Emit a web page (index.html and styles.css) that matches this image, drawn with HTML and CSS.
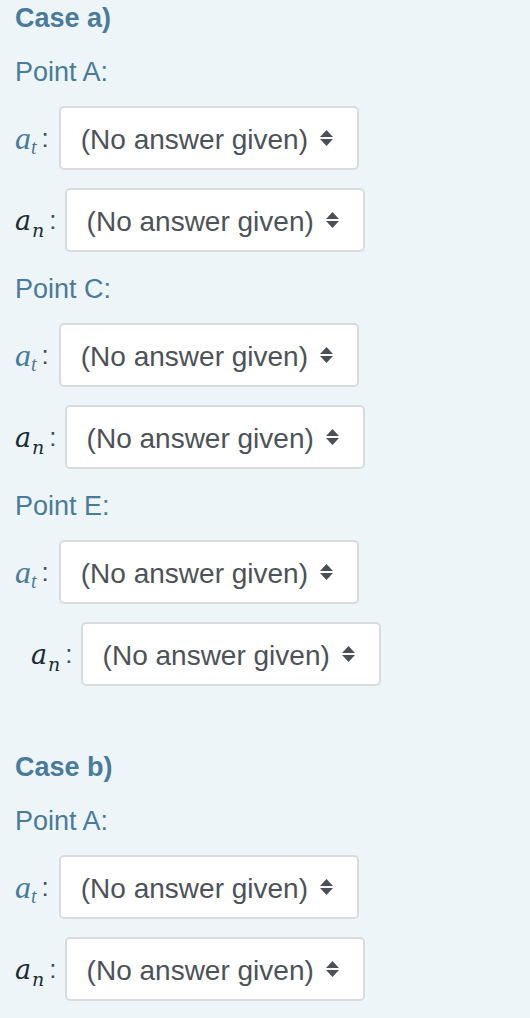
FILE: index.html
```html
<!DOCTYPE html>
<html lang="en">
<head>
<meta charset="utf-8">
<title>Cases</title>
<link rel="stylesheet" href="styles.css">
</head>
<body>
<div class="page">
  <section class="case">
    <h2 class="case-title">Case a)</h2>
    <div class="point">
      <p class="point-title">Point A:</p>
      <div class="field">
        <span class="var var-t"><i class="sym">a</i><sub class="idx">t</sub></span><span class="colon">:</span>
        <div class="select"><span class="select-text">(No answer given)</span><svg class="arrows" width="13" height="16" viewBox="0 0 13 16"><polygon points="0,7 6.5,0 13,7"/><polygon points="0,9 13,9 6.5,16"/></svg></div>
      </div>
      <div class="field">
        <span class="var var-n"><i class="sym">a</i><sub class="idx">n</sub></span><span class="colon">:</span>
        <div class="select"><span class="select-text">(No answer given)</span><svg class="arrows" width="13" height="16" viewBox="0 0 13 16"><polygon points="0,7 6.5,0 13,7"/><polygon points="0,9 13,9 6.5,16"/></svg></div>
      </div>
    </div>
    <div class="point">
      <p class="point-title">Point C:</p>
      <div class="field">
        <span class="var var-t"><i class="sym">a</i><sub class="idx">t</sub></span><span class="colon">:</span>
        <div class="select"><span class="select-text">(No answer given)</span><svg class="arrows" width="13" height="16" viewBox="0 0 13 16"><polygon points="0,7 6.5,0 13,7"/><polygon points="0,9 13,9 6.5,16"/></svg></div>
      </div>
      <div class="field">
        <span class="var var-n"><i class="sym">a</i><sub class="idx">n</sub></span><span class="colon">:</span>
        <div class="select"><span class="select-text">(No answer given)</span><svg class="arrows" width="13" height="16" viewBox="0 0 13 16"><polygon points="0,7 6.5,0 13,7"/><polygon points="0,9 13,9 6.5,16"/></svg></div>
      </div>
    </div>
    <div class="point">
      <p class="point-title">Point E:</p>
      <div class="field">
        <span class="var var-t"><i class="sym">a</i><sub class="idx">t</sub></span><span class="colon">:</span>
        <div class="select"><span class="select-text">(No answer given)</span><svg class="arrows" width="13" height="16" viewBox="0 0 13 16"><polygon points="0,7 6.5,0 13,7"/><polygon points="0,9 13,9 6.5,16"/></svg></div>
      </div>
      <div class="field field-indent">
        <span class="var var-n"><i class="sym">a</i><sub class="idx">n</sub></span><span class="colon">:</span>
        <div class="select"><span class="select-text">(No answer given)</span><svg class="arrows" width="13" height="16" viewBox="0 0 13 16"><polygon points="0,7 6.5,0 13,7"/><polygon points="0,9 13,9 6.5,16"/></svg></div>
      </div>
    </div>
  </section>
  <section class="case">
    <h2 class="case-title">Case b)</h2>
    <div class="point">
      <p class="point-title">Point A:</p>
      <div class="field">
        <span class="var var-t"><i class="sym">a</i><sub class="idx">t</sub></span><span class="colon">:</span>
        <div class="select"><span class="select-text">(No answer given)</span><svg class="arrows" width="13" height="16" viewBox="0 0 13 16"><polygon points="0,7 6.5,0 13,7"/><polygon points="0,9 13,9 6.5,16"/></svg></div>
      </div>
      <div class="field">
        <span class="var var-n"><i class="sym">a</i><sub class="idx">n</sub></span><span class="colon">:</span>
        <div class="select"><span class="select-text">(No answer given)</span><svg class="arrows" width="13" height="16" viewBox="0 0 13 16"><polygon points="0,7 6.5,0 13,7"/><polygon points="0,9 13,9 6.5,16"/></svg></div>
      </div>
    </div>
  </section>
</div>
</body>
</html>
```
FILE: styles.css
```css
html, body {
  margin: 0;
  padding: 0;
  background: #edf5f9;
}

body {
  font-family: "Liberation Sans", Arial, sans-serif;
  color: #4a7b98;
}

.page {
  padding: 2px 15px 0 15px;
}

.case + .case {
  margin-top: 65px;
}

.case-title {
  margin: 0;
  font-size: 27px;
  line-height: 32px;
  font-weight: bold;
  color: #4a7b98;
}

.point {
  display: flex;
  flex-direction: column;
  gap: 18px;
  margin-top: 21px;
}

.case-title + .point {
  margin-top: 22px;
}

.point-title {
  margin: 0;
  font-size: 27px;
  line-height: 32px;
  color: #4a7b98;
}

.field {
  display: flex;
  align-items: center;
}

.field-indent {
  margin-left: 16px;
}

.var {
  display: inline-block;
  white-space: nowrap;
  line-height: 1;
}

.sym {
  font-style: italic;
}

.idx {
  font-style: italic;
  line-height: 0;
}

.var-t {
  font-family: "Liberation Serif", "Times New Roman", serif;
  color: #4a7b98;
}

.var-t .sym {
  font-size: 32px;
}

.var-t .idx {
  font-size: 20px;
  vertical-align: -5px;
}

.var-n {
  font-family: "DejaVu Serif", serif;
  color: #1d2c34;
}

.var-n .sym {
  font-size: 27px;
}

.var-n .idx {
  font-size: 19px;
  vertical-align: -7px;
  margin-left: 1px;
}

.colon {
  font-family: "Liberation Sans", Arial, sans-serif;
  font-size: 26px;
  color: #3e4d56;
  margin-left: 5px;
  margin-right: 10px;
}

.var-n + .colon {
  margin-left: 5px;
  margin-right: 8px;
}

.select {
  box-sizing: border-box;
  width: 300px;
  height: 64px;
  background: #ffffff;
  border: 2px solid #d8dcdf;
  border-radius: 5px;
  display: flex;
  align-items: center;
  justify-content: space-between;
  padding: 3px 24px 0 20px;
}

.select-text {
  font-size: 28px;
  color: #4d5258;
  white-space: nowrap;
}

.arrows {
  fill: #4b5056;
  flex: none;
  margin-top: -3px;
}
```
